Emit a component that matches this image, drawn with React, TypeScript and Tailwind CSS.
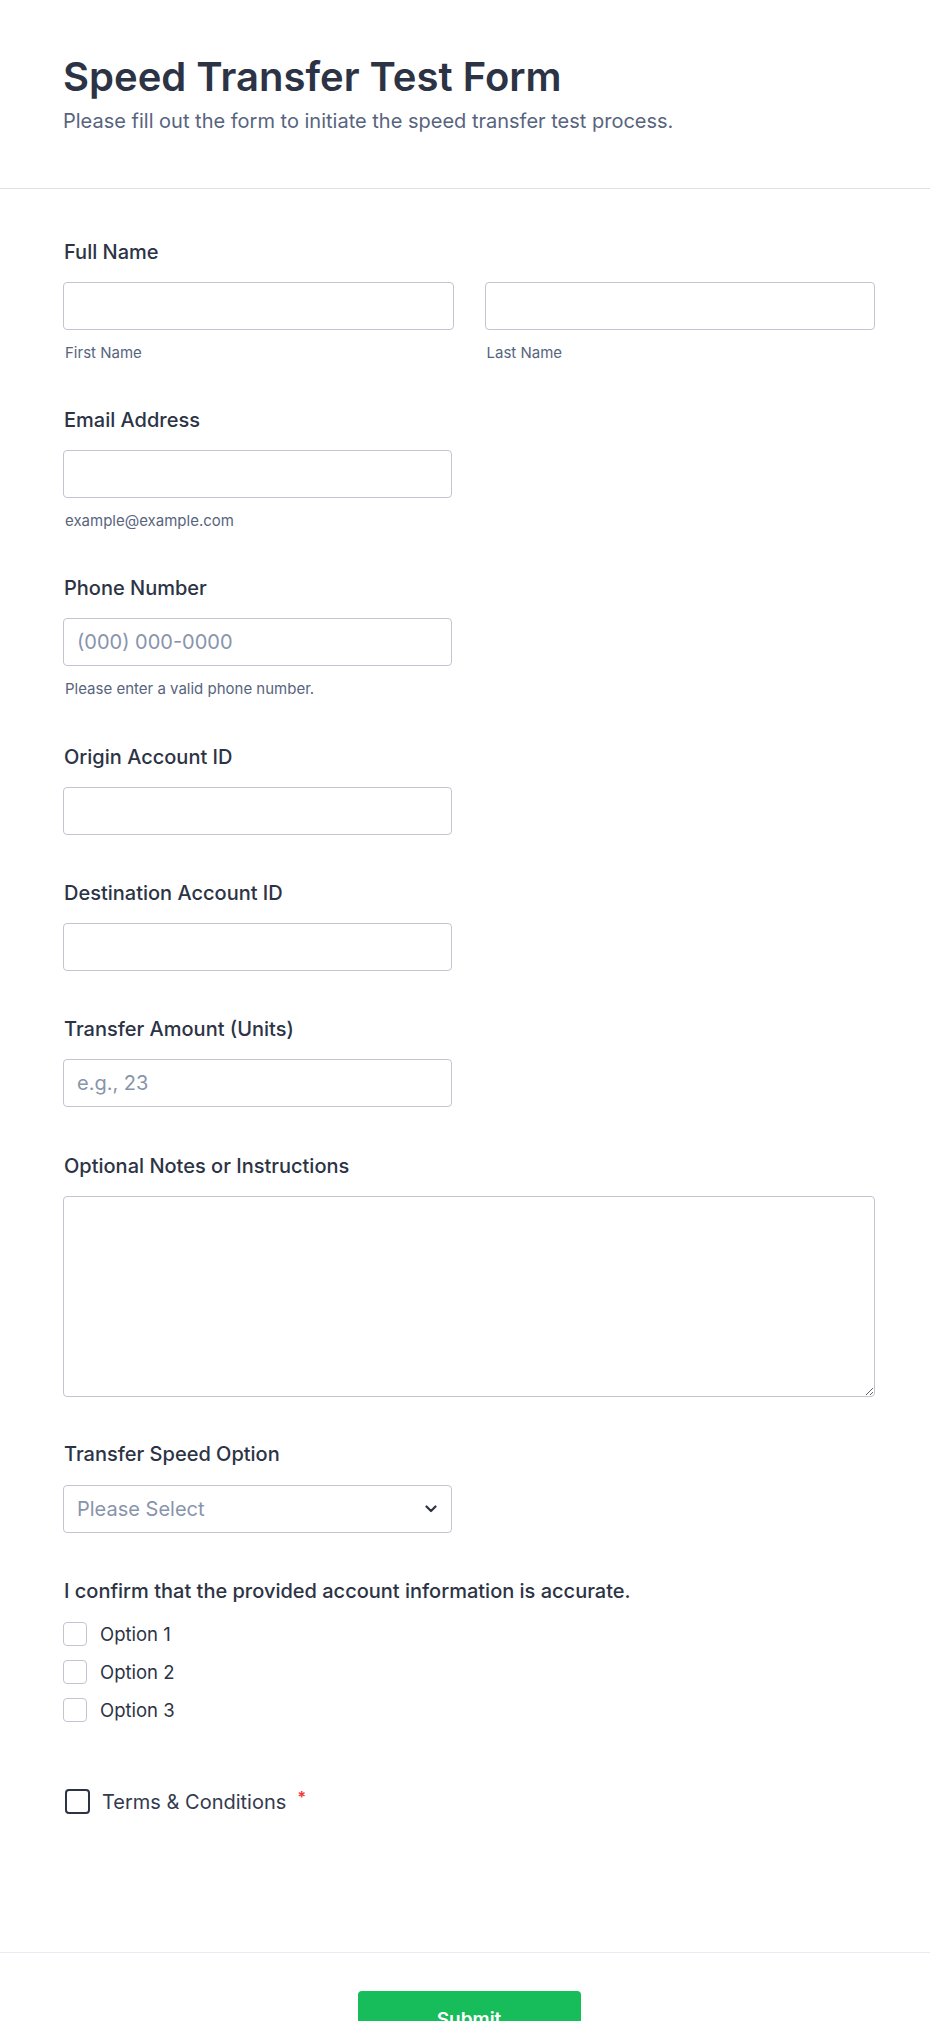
import React from 'react';

const labelCls = 'block pl-[1px] text-[20px] leading-[24px] font-medium text-[#2c3345]';
const subCls = 'mt-[13px] pl-[2px] text-[15px] leading-[20px] text-[#57647e]';
const inputCls =
  'block h-[48px] rounded-[4px] border border-[#c0c5d0] bg-white px-[13px] text-[20px] text-[#2c3345] placeholder:text-[#8894ab] outline-none';

const Field = ({ label, sub, placeholder, className = '' }: { label: string; sub?: string; placeholder?: string; className?: string }) => (
  <div className={className}>
    <label className={labelCls}>{label}</label>
    <input className={`${inputCls} mt-[18px] w-[389px]`} placeholder={placeholder} />
    {sub && <p className={subCls}>{sub}</p>}
  </div>
);

const Box = ({ label }: { label: string }) => (
  <div className="flex h-[24px] items-center gap-[13px]">
    <span className="h-[24px] w-[24px] rounded-[4px] border border-[#c0c5d0] bg-white" />
    <span className="text-[18.5px] leading-[24px] text-[#2c3345]">{label}</span>
  </div>
);

export default function App() {
  return (
    <div className="min-h-screen bg-white font-['Inter',sans-serif]">
      {/* header */}
      <header className="border-b border-[#dcdfe5] px-[63px] pt-[53px] pb-[55px]">
        <h1 className="text-[40px] leading-[48px] font-semibold text-[#2c3345]">Speed Transfer Test Form</h1>
        <p className="mt-[8px] text-[20px] leading-[24px] text-[#57647e]">
          Please fill out the form to initiate the speed transfer test process.
        </p>
      </header>

      {/* form body */}
      <main className="flex flex-col gap-[45px] pl-[63px] pr-[55px] pt-[51px] pb-[138px]">
        <div>
          <label className={labelCls}>Full Name</label>
          <div className="mt-[18px] grid grid-cols-2 gap-[31px]">
            <div>
              <input className={`${inputCls} w-full`} />
              <p className={subCls}>First Name</p>
            </div>
            <div>
              <input className={`${inputCls} w-full`} />
              <p className={subCls}>Last Name</p>
            </div>
          </div>
        </div>

        <Field label="Email Address" sub="example@example.com" />
        <Field label="Phone Number" sub="Please enter a valid phone number." placeholder="(000) 000-0000" />
        <Field label="Origin Account ID" className="mt-[1px]" />
        <Field label="Destination Account ID" className="mt-[1px]" />
        <Field label="Transfer Amount (Units)" className="mt-[1px]" placeholder="e.g., 23" />

        <div className="mt-[2px]">
          <label className={labelCls}>Optional Notes or Instructions</label>
          <textarea className="mt-[18px] block h-[201px] w-full rounded-[4px] border border-[#c0c5d0] bg-white px-[13px] py-[10px] text-[20px] text-[#2c3345] outline-none" />
        </div>

        <div>
          <label className={labelCls}>Transfer Speed Option</label>
          <div className="mt-[19px] flex h-[48px] w-[389px] items-center justify-between rounded-[4px] border border-[#c0c5d0] bg-white pl-[13px] pr-[14px]">
            <span className="text-[20px] text-[#8894ab]">Please Select</span>
            <svg width="12" height="8" viewBox="0 0 12 8" fill="none">
              <path d="M1.5 1.5L6 6l4.5-4.5" stroke="#2c3345" strokeWidth="2.2" strokeLinecap="round" strokeLinejoin="round" />
            </svg>
          </div>
        </div>

        <div>
          <p className="pl-[1px] text-[20px] leading-[26px] font-medium text-[#2c3345]">
            I confirm that the provided account information is accurate.
          </p>
          <div className="mt-[18px] flex flex-col gap-[14px]">
            <Box label="Option 1" />
            <Box label="Option 2" />
            <Box label="Option 3" />
          </div>
        </div>

        <div className="mt-[22px] flex h-[25px] items-center gap-[12px] pl-[2px]">
          <span className="h-[25px] w-[25px] rounded-[4px] border-2 border-[#2c3345] bg-white" />
          <span className="text-[20px] leading-[24px] text-[#343a4e]">Terms &amp; Conditions</span>
          <span className="-ml-[1px] self-start text-[16px] leading-[16px] font-bold text-[#f23a3c]">*</span>
        </div>
      </main>

      {/* footer */}
      <footer className="border-t border-[#eaebf2] pl-[63px] pr-[55px] pt-[38px] pb-[40px]">
        <div className="flex justify-center">
          <button className="h-[58px] w-[223px] rounded-[4px] bg-[#18bd5b] text-[19px] font-semibold text-white">
            Submit
          </button>
        </div>
      </footer>
    </div>
  );
}
